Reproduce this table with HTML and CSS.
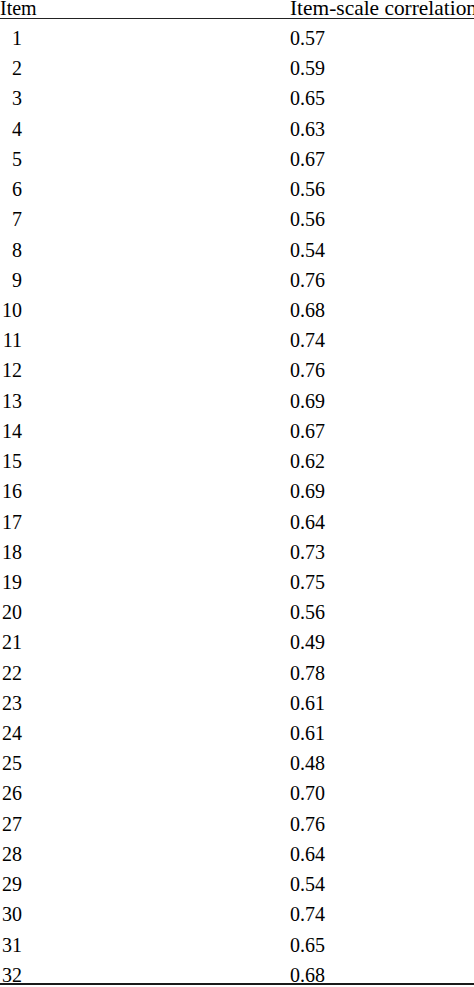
FILE: index.html
```html
<!DOCTYPE html>
<html lang="en">
<head>
<meta charset="utf-8">
<title>Item-scale correlation</title>
<link rel="stylesheet" href="styles.css">
</head>
<body>
<div class="table">
  <div class="head">
    <div class="col-item">Item</div>
    <div class="col-val">Item-scale correlation</div>
  </div>
  <div class="body">
    <div class="row"><div class="col-item"><span class="num">1</span></div><div class="col-val">0.57</div></div>
    <div class="row"><div class="col-item"><span class="num">2</span></div><div class="col-val">0.59</div></div>
    <div class="row"><div class="col-item"><span class="num">3</span></div><div class="col-val">0.65</div></div>
    <div class="row"><div class="col-item"><span class="num">4</span></div><div class="col-val">0.63</div></div>
    <div class="row"><div class="col-item"><span class="num">5</span></div><div class="col-val">0.67</div></div>
    <div class="row"><div class="col-item"><span class="num">6</span></div><div class="col-val">0.56</div></div>
    <div class="row"><div class="col-item"><span class="num">7</span></div><div class="col-val">0.56</div></div>
    <div class="row"><div class="col-item"><span class="num">8</span></div><div class="col-val">0.54</div></div>
    <div class="row"><div class="col-item"><span class="num">9</span></div><div class="col-val">0.76</div></div>
    <div class="row"><div class="col-item"><span class="num">10</span></div><div class="col-val">0.68</div></div>
    <div class="row"><div class="col-item"><span class="num">11</span></div><div class="col-val">0.74</div></div>
    <div class="row"><div class="col-item"><span class="num">12</span></div><div class="col-val">0.76</div></div>
    <div class="row"><div class="col-item"><span class="num">13</span></div><div class="col-val">0.69</div></div>
    <div class="row"><div class="col-item"><span class="num">14</span></div><div class="col-val">0.67</div></div>
    <div class="row"><div class="col-item"><span class="num">15</span></div><div class="col-val">0.62</div></div>
    <div class="row"><div class="col-item"><span class="num">16</span></div><div class="col-val">0.69</div></div>
    <div class="row"><div class="col-item"><span class="num">17</span></div><div class="col-val">0.64</div></div>
    <div class="row"><div class="col-item"><span class="num">18</span></div><div class="col-val">0.73</div></div>
    <div class="row"><div class="col-item"><span class="num">19</span></div><div class="col-val">0.75</div></div>
    <div class="row"><div class="col-item"><span class="num">20</span></div><div class="col-val">0.56</div></div>
    <div class="row"><div class="col-item"><span class="num">21</span></div><div class="col-val">0.49</div></div>
    <div class="row"><div class="col-item"><span class="num">22</span></div><div class="col-val">0.78</div></div>
    <div class="row"><div class="col-item"><span class="num">23</span></div><div class="col-val">0.61</div></div>
    <div class="row"><div class="col-item"><span class="num">24</span></div><div class="col-val">0.61</div></div>
    <div class="row"><div class="col-item"><span class="num">25</span></div><div class="col-val">0.48</div></div>
    <div class="row"><div class="col-item"><span class="num">26</span></div><div class="col-val">0.70</div></div>
    <div class="row"><div class="col-item"><span class="num">27</span></div><div class="col-val">0.76</div></div>
    <div class="row"><div class="col-item"><span class="num">28</span></div><div class="col-val">0.64</div></div>
    <div class="row"><div class="col-item"><span class="num">29</span></div><div class="col-val">0.54</div></div>
    <div class="row"><div class="col-item"><span class="num">30</span></div><div class="col-val">0.74</div></div>
    <div class="row"><div class="col-item"><span class="num">31</span></div><div class="col-val">0.65</div></div>
    <div class="row last"><div class="col-item"><span class="num">32</span></div><div class="col-val">0.68</div></div>
  </div>
</div>
</body>
</html>
```

FILE: styles.css
```css
html, body {
  margin: 0;
  padding: 0;
  background: #ffffff;
}

body {
  width: 474px;
  overflow: hidden;
  font-family: "Liberation Serif", "Times New Roman", serif;
  font-size: 20px;
  color: #000000;
}

.table {
  width: 474px;
  border-bottom: 2px solid #1a1a1a;
}

.head {
  display: grid;
  grid-template-columns: 290px 1fr;
  line-height: 16px;
  padding-bottom: 2px;
  border-bottom: 1px solid #222222;
  white-space: nowrap;
}

.head .col-val {
  font-size: 21.4px;
}

.body {
  display: flex;
  flex-direction: column;
  padding-top: 4px;
}

.row {
  display: grid;
  grid-template-columns: 290px 1fr;
  height: 30.23px;
  line-height: 30.23px;
}

.row.last {
  height: 22.8px;
}

.num {
  display: inline-block;
  width: 22px;
  text-align: right;
}
```
